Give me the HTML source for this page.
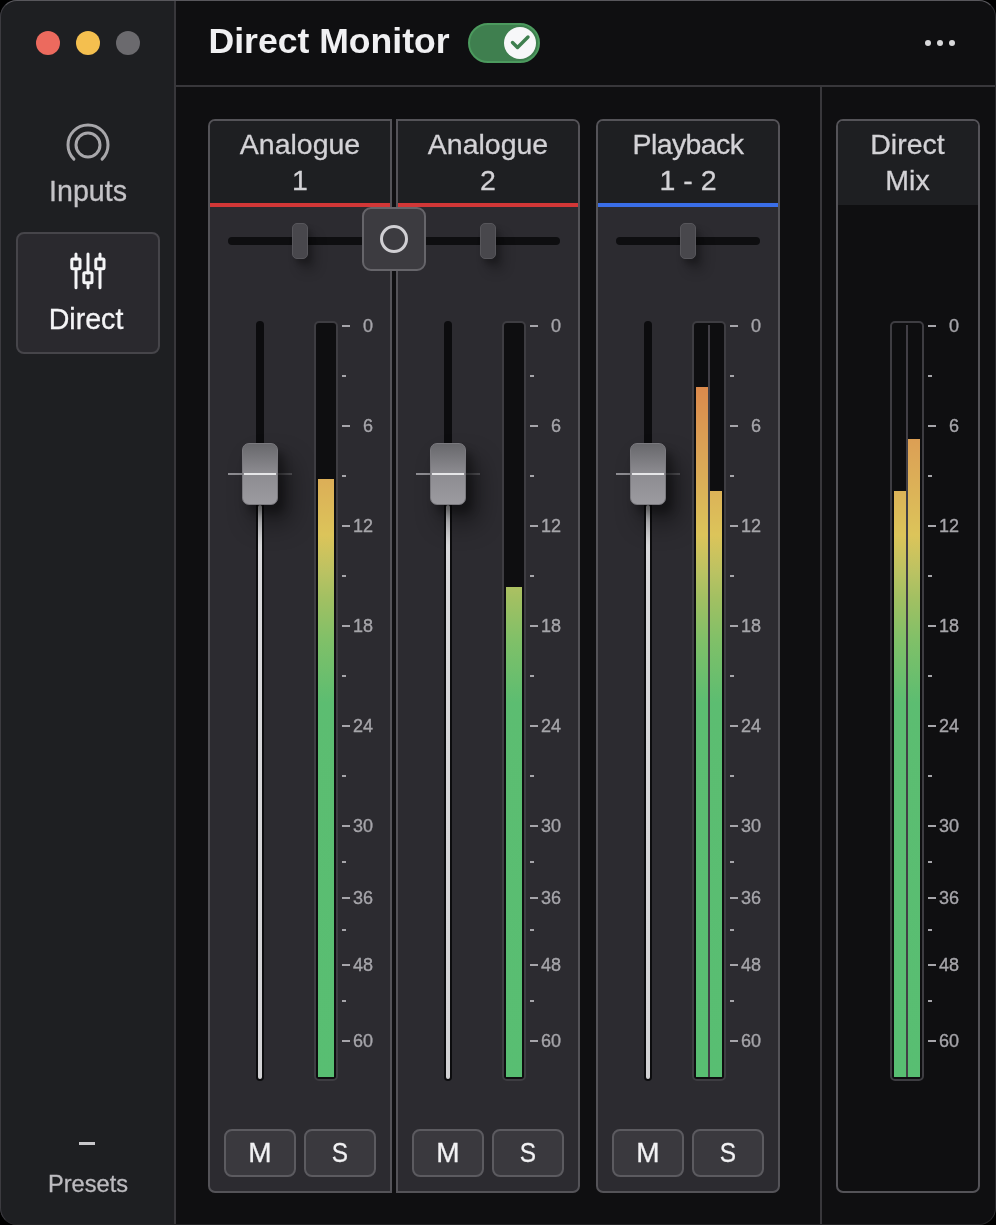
<!DOCTYPE html><html><head><meta charset="utf-8"><style>
*{box-sizing:border-box;margin:0;padding:0}
html,body{width:996px;height:1225px;overflow:hidden;background:#000;font-family:"Liberation Sans",sans-serif}
.a{position:absolute}
#win{left:0;top:0;width:996px;height:1225px;border-radius:17px;overflow:hidden;background:#0f0f11;will-change:transform}
#frame{left:0;top:0;width:996px;height:1225px;border-radius:17px;border:1px solid;border-color:#58575c #2c2b2e #252527 #3c3b40;pointer-events:none}
.dot{width:24px;height:24px;border-radius:12px}
.stext{left:0;width:176px;text-align:center;white-space:nowrap}
.pname{text-align:center;color:#d3d2d6;font-size:28px;line-height:36px;white-space:nowrap}
.tick{height:2px;background:#a6a5aa}
.lab{width:40px;text-align:right;color:#a6a5aa;font-size:18px;line-height:20px;-webkit-text-stroke:0.35px #a6a5aa}
.btn{width:72px;height:48px;border:2px solid #56555a;background:#38373c;border-radius:8px;color:#f0f0f2;font-size:28px;line-height:44px;text-align:center}
</style></head><body>
<div id="win" class="a">
<div class="a" style="left:0px;top:0px;width:174px;height:1225px;background:#1e1f22"></div>
<div class="a" style="left:174px;top:0px;width:2px;height:1225px;background:#38373b"></div>
<div class="a" style="left:36px;top:31px;width:24px;height:24px;background:#ec6a5e;border-radius:12px"></div>
<div class="a" style="left:76px;top:31px;width:24px;height:24px;background:#f4bf4f;border-radius:12px"></div>
<div class="a" style="left:116px;top:31px;width:24px;height:24px;background:#6b6a6e;border-radius:12px"></div>
<div class="a" style="left:176px;top:85px;width:820px;height:2px;background:#38373b"></div>
<div class="a" style="left:820px;top:87px;width:2px;height:1140px;background:#38373b"></div>
<div class="a" style="left:208.50px;top:19.26px;width:400px;text-align:left;font-size:35.6px;line-height:44px;color:#f0f0f2;white-space:nowrap;font-weight:bold;">Direct Monitor</div>
<div class="a" style="left:468px;top:23px;width:72px;height:40px;background:#3f7f4f;border:2px solid #4c9a5e;border-radius:20px"></div>
<svg class="a" style="left:500px;top:23px" width="40" height="40" viewBox="0 0 40 40"><circle cx="20" cy="20" r="16" fill="#f7f7f9"/><path d="M12.5 19.5 L17.5 24.5 L28 14" fill="none" stroke="#3f7f4f" stroke-width="3.4" stroke-linecap="round" stroke-linejoin="round"/></svg>
<div class="a" style="left:925px;top:40px;width:6px;height:6px;background:#d8d8da;border-radius:3px"></div>
<div class="a" style="left:937px;top:40px;width:6px;height:6px;background:#d8d8da;border-radius:3px"></div>
<div class="a" style="left:949px;top:40px;width:6px;height:6px;background:#d8d8da;border-radius:3px"></div>
<svg class="a" style="left:58px;top:115px" width="60" height="60" viewBox="0 0 60 60"><path d="M15.9 44.1 A20 20 0 1 1 44.1 44.1" fill="none" stroke="#a8a7ab" stroke-width="3" stroke-linecap="round"/><circle cx="30" cy="30" r="12" fill="none" stroke="#a8a7ab" stroke-width="3"/></svg>
<div class="a" style="left:-62.00px;top:173.29px;width:300px;text-align:center;font-size:28.6px;line-height:36px;color:#c4c3c7;white-space:nowrap;-webkit-text-stroke:0.3px #c4c3c7;">Inputs</div>
<div class="a" style="left:16px;top:232px;width:144px;height:122px;background:#2a292e;border:2px solid #46454a;border-radius:8px"></div>
<svg class="a" style="left:58px;top:240px" width="60" height="60" viewBox="58 240 60 60" fill="none" stroke="#f4f4f6" stroke-width="3" stroke-linecap="round"><path d="M76 254 V259 M76 269 V287.8 M88 254 V273 M88 283 V287.8 M100 254 V259 M100 269 V287.8"/><rect x="71.8" y="259" width="8.2" height="9.8" rx="1"/><rect x="83.8" y="272.8" width="8.2" height="10" rx="1"/><rect x="95.8" y="259" width="8.2" height="9.8" rx="1"/></svg>
<div class="a" style="left:-64.00px;top:300.89px;width:300px;text-align:center;font-size:28.6px;line-height:36px;color:#f4f4f6;white-space:nowrap;-webkit-text-stroke:0.3px #f4f4f6;">Direct</div>
<div class="a" style="left:79px;top:1142px;width:16px;height:3px;background:#c8c7cb"></div>
<div class="a" style="left:-62.00px;top:1169.02px;width:300px;text-align:center;font-size:23.6px;line-height:30px;color:#bdbcc0;white-space:nowrap;-webkit-text-stroke:0.3px #bdbcc0;">Presets</div>
<div class="a" style="left:208px;top:119px;width:184px;height:1074px;background:#2c2b30;border:2px solid #545358;border-radius:7px 0 0 7px;overflow:hidden"><div class="a" style="left:0;top:0;width:180px;height:84px;background:#1e1f22"></div><div class="a" style="left:0;top:82px;width:180px;height:4px;background:#d23737"></div></div>
<div class="a" style="left:150.00px;top:125.92px;width:300px;text-align:center;font-size:28.5px;line-height:36px;color:#d3d2d6;white-space:nowrap;-webkit-text-stroke:0.3px #d3d2d6;">Analogue</div>
<div class="a" style="left:150.00px;top:161.82px;width:300px;text-align:center;font-size:28.5px;line-height:36px;color:#d3d2d6;white-space:nowrap;-webkit-text-stroke:0.3px #d3d2d6;">1</div>
<div class="a" style="left:228px;top:237px;width:152px;height:8px;background:#0e0e10;border-radius:4px"></div>
<div class="a" style="left:292px;top:223px;width:16px;height:36px;background:#48474c;border:1px solid #57565b;border-radius:5px;box-shadow:3px 5px 5px rgba(0,0,0,.22),8px 12px 12px rgba(0,0,0,.22)"></div>
<div class="a" style="left:256px;top:321px;width:8px;height:760px;background:#0c0c0e;border-radius:4px"></div>
<div class="a" style="left:258px;top:505px;width:4px;height:574px;background:linear-gradient(#b8b8bb,#d8d8da 40px,#d2d2d4);border-radius:2px"></div>
<div class="a" style="left:228px;top:473px;width:64px;height:2px;background:linear-gradient(to right,#8e8d92 0,#8e8d92 50%,#56555a 50%,#56555a 100%)"></div>
<div class="a" style="left:242px;top:443px;width:36px;height:62px;background:linear-gradient(#68686c,#8c8b90 48%,#9c9ba0);border-radius:7px;box-shadow:6px 8px 8px rgba(0,0,0,.3),12px 18px 26px rgba(0,0,0,.45);border:1px solid #7a797e"></div>
<div class="a" style="left:244px;top:473px;width:32px;height:2px;background:#e6e6e8"></div>
<div class="a" style="left:314px;top:321px;width:24px;height:760px;background:#0e0e10;border:2px solid #3e3d42;border-radius:5px"></div>
<div class="a" style="left:318px;top:479px;width:16px;height:598px;background:linear-gradient(to bottom,#e07a46 0px,#dc8a4c 64px,#dca456 130px,#dcc45a 212px,#bac262 250px,#a2c062 275px,#80c068 317px,#5cbd71 380px,#58be72 760px);background-size:100% 756px;background-position:0 -156px"></div>
<div class="a" style="left:342px;top:325px;width:8px;height:2px;background:#a6a5aa"></div>
<div class="a lab" style="left:333px;top:316px;left:333px">0</div>
<div class="a" style="left:342px;top:375px;width:4px;height:2px;background:#a6a5aa"></div>
<div class="a" style="left:342px;top:425px;width:8px;height:2px;background:#a6a5aa"></div>
<div class="a lab" style="left:333px;top:416px;left:333px">6</div>
<div class="a" style="left:342px;top:475px;width:4px;height:2px;background:#a6a5aa"></div>
<div class="a" style="left:342px;top:525px;width:8px;height:2px;background:#a6a5aa"></div>
<div class="a lab" style="left:333px;top:516px;left:333px">12</div>
<div class="a" style="left:342px;top:575px;width:4px;height:2px;background:#a6a5aa"></div>
<div class="a" style="left:342px;top:625px;width:8px;height:2px;background:#a6a5aa"></div>
<div class="a lab" style="left:333px;top:616px;left:333px">18</div>
<div class="a" style="left:342px;top:675px;width:4px;height:2px;background:#a6a5aa"></div>
<div class="a" style="left:342px;top:725px;width:8px;height:2px;background:#a6a5aa"></div>
<div class="a lab" style="left:333px;top:716px;left:333px">24</div>
<div class="a" style="left:342px;top:775px;width:4px;height:2px;background:#a6a5aa"></div>
<div class="a" style="left:342px;top:825px;width:8px;height:2px;background:#a6a5aa"></div>
<div class="a lab" style="left:333px;top:816px;left:333px">30</div>
<div class="a" style="left:342px;top:861px;width:4px;height:2px;background:#a6a5aa"></div>
<div class="a" style="left:342px;top:897px;width:8px;height:2px;background:#a6a5aa"></div>
<div class="a lab" style="left:333px;top:888px;left:333px">36</div>
<div class="a" style="left:342px;top:929px;width:4px;height:2px;background:#a6a5aa"></div>
<div class="a" style="left:342px;top:964px;width:8px;height:2px;background:#a6a5aa"></div>
<div class="a lab" style="left:333px;top:955px;left:333px">48</div>
<div class="a" style="left:342px;top:1000px;width:4px;height:2px;background:#a6a5aa"></div>
<div class="a" style="left:342px;top:1040px;width:8px;height:2px;background:#a6a5aa"></div>
<div class="a lab" style="left:333px;top:1031px;left:333px">60</div>
<div class="a" style="left:224px;top:1129px;width:72px;height:48px;background:#3a393e;border:2px solid #5c5b60;border-radius:8px"></div>
<div class="a" style="left:304px;top:1129px;width:72px;height:48px;background:#3a393e;border:2px solid #5c5b60;border-radius:8px"></div>
<div class="a" style="left:110.00px;top:1134.80px;width:300px;text-align:center;font-size:28px;line-height:35px;color:#f2f2f4;white-space:nowrap;-webkit-text-stroke:0.3px #f2f2f4;">M</div>
<div class="a" style="left:190.00px;top:1134.80px;width:300px;text-align:center;font-size:28px;line-height:35px;color:#f2f2f4;white-space:nowrap;-webkit-text-stroke:0.3px #f2f2f4;transform:scaleX(.87)">S</div>
<div class="a" style="left:396px;top:119px;width:184px;height:1074px;background:#2c2b30;border:2px solid #545358;border-radius:0 7px 7px 0;overflow:hidden"><div class="a" style="left:0;top:0;width:180px;height:84px;background:#1e1f22"></div><div class="a" style="left:0;top:82px;width:180px;height:4px;background:#d23737"></div></div>
<div class="a" style="left:338.00px;top:125.92px;width:300px;text-align:center;font-size:28.5px;line-height:36px;color:#d3d2d6;white-space:nowrap;-webkit-text-stroke:0.3px #d3d2d6;">Analogue</div>
<div class="a" style="left:338.00px;top:161.82px;width:300px;text-align:center;font-size:28.5px;line-height:36px;color:#d3d2d6;white-space:nowrap;-webkit-text-stroke:0.3px #d3d2d6;">2</div>
<div class="a" style="left:408px;top:237px;width:152px;height:8px;background:#0e0e10;border-radius:4px"></div>
<div class="a" style="left:480px;top:223px;width:16px;height:36px;background:#48474c;border:1px solid #57565b;border-radius:5px;box-shadow:3px 5px 5px rgba(0,0,0,.22),8px 12px 12px rgba(0,0,0,.22)"></div>
<div class="a" style="left:444px;top:321px;width:8px;height:760px;background:#0c0c0e;border-radius:4px"></div>
<div class="a" style="left:446px;top:505px;width:4px;height:574px;background:linear-gradient(#b8b8bb,#d8d8da 40px,#d2d2d4);border-radius:2px"></div>
<div class="a" style="left:416px;top:473px;width:64px;height:2px;background:linear-gradient(to right,#8e8d92 0,#8e8d92 50%,#56555a 50%,#56555a 100%)"></div>
<div class="a" style="left:430px;top:443px;width:36px;height:62px;background:linear-gradient(#68686c,#8c8b90 48%,#9c9ba0);border-radius:7px;box-shadow:6px 8px 8px rgba(0,0,0,.3),12px 18px 26px rgba(0,0,0,.45);border:1px solid #7a797e"></div>
<div class="a" style="left:432px;top:473px;width:32px;height:2px;background:#e6e6e8"></div>
<div class="a" style="left:502px;top:321px;width:24px;height:760px;background:#0e0e10;border:2px solid #3e3d42;border-radius:5px"></div>
<div class="a" style="left:506px;top:587px;width:16px;height:490px;background:linear-gradient(to bottom,#e07a46 0px,#dc8a4c 64px,#dca456 130px,#dcc45a 212px,#bac262 250px,#a2c062 275px,#80c068 317px,#5cbd71 380px,#58be72 760px);background-size:100% 756px;background-position:0 -264px"></div>
<div class="a" style="left:530px;top:325px;width:8px;height:2px;background:#a6a5aa"></div>
<div class="a lab" style="left:521px;top:316px;left:521px">0</div>
<div class="a" style="left:530px;top:375px;width:4px;height:2px;background:#a6a5aa"></div>
<div class="a" style="left:530px;top:425px;width:8px;height:2px;background:#a6a5aa"></div>
<div class="a lab" style="left:521px;top:416px;left:521px">6</div>
<div class="a" style="left:530px;top:475px;width:4px;height:2px;background:#a6a5aa"></div>
<div class="a" style="left:530px;top:525px;width:8px;height:2px;background:#a6a5aa"></div>
<div class="a lab" style="left:521px;top:516px;left:521px">12</div>
<div class="a" style="left:530px;top:575px;width:4px;height:2px;background:#a6a5aa"></div>
<div class="a" style="left:530px;top:625px;width:8px;height:2px;background:#a6a5aa"></div>
<div class="a lab" style="left:521px;top:616px;left:521px">18</div>
<div class="a" style="left:530px;top:675px;width:4px;height:2px;background:#a6a5aa"></div>
<div class="a" style="left:530px;top:725px;width:8px;height:2px;background:#a6a5aa"></div>
<div class="a lab" style="left:521px;top:716px;left:521px">24</div>
<div class="a" style="left:530px;top:775px;width:4px;height:2px;background:#a6a5aa"></div>
<div class="a" style="left:530px;top:825px;width:8px;height:2px;background:#a6a5aa"></div>
<div class="a lab" style="left:521px;top:816px;left:521px">30</div>
<div class="a" style="left:530px;top:861px;width:4px;height:2px;background:#a6a5aa"></div>
<div class="a" style="left:530px;top:897px;width:8px;height:2px;background:#a6a5aa"></div>
<div class="a lab" style="left:521px;top:888px;left:521px">36</div>
<div class="a" style="left:530px;top:929px;width:4px;height:2px;background:#a6a5aa"></div>
<div class="a" style="left:530px;top:964px;width:8px;height:2px;background:#a6a5aa"></div>
<div class="a lab" style="left:521px;top:955px;left:521px">48</div>
<div class="a" style="left:530px;top:1000px;width:4px;height:2px;background:#a6a5aa"></div>
<div class="a" style="left:530px;top:1040px;width:8px;height:2px;background:#a6a5aa"></div>
<div class="a lab" style="left:521px;top:1031px;left:521px">60</div>
<div class="a" style="left:412px;top:1129px;width:72px;height:48px;background:#3a393e;border:2px solid #5c5b60;border-radius:8px"></div>
<div class="a" style="left:492px;top:1129px;width:72px;height:48px;background:#3a393e;border:2px solid #5c5b60;border-radius:8px"></div>
<div class="a" style="left:298.00px;top:1134.80px;width:300px;text-align:center;font-size:28px;line-height:35px;color:#f2f2f4;white-space:nowrap;-webkit-text-stroke:0.3px #f2f2f4;">M</div>
<div class="a" style="left:378.00px;top:1134.80px;width:300px;text-align:center;font-size:28px;line-height:35px;color:#f2f2f4;white-space:nowrap;-webkit-text-stroke:0.3px #f2f2f4;transform:scaleX(.87)">S</div>
<div class="a" style="left:596px;top:119px;width:184px;height:1074px;background:#2c2b30;border:2px solid #545358;border-radius:7px 7px 7px 7px;overflow:hidden"><div class="a" style="left:0;top:0;width:180px;height:84px;background:#1e1f22"></div><div class="a" style="left:0;top:82px;width:180px;height:4px;background:#3a6ee8"></div></div>
<div class="a" style="left:538.00px;top:125.92px;width:300px;text-align:center;font-size:28.5px;line-height:36px;color:#d3d2d6;white-space:nowrap;-webkit-text-stroke:0.3px #d3d2d6;letter-spacing:-0.6px">Playback</div>
<div class="a" style="left:538.00px;top:161.82px;width:300px;text-align:center;font-size:28.5px;line-height:36px;color:#d3d2d6;white-space:nowrap;-webkit-text-stroke:0.3px #d3d2d6;">1 - 2</div>
<div class="a" style="left:616px;top:237px;width:144px;height:8px;background:#0e0e10;border-radius:4px"></div>
<div class="a" style="left:680px;top:223px;width:16px;height:36px;background:#48474c;border:1px solid #57565b;border-radius:5px;box-shadow:3px 5px 5px rgba(0,0,0,.22),8px 12px 12px rgba(0,0,0,.22)"></div>
<div class="a" style="left:644px;top:321px;width:8px;height:760px;background:#0c0c0e;border-radius:4px"></div>
<div class="a" style="left:646px;top:505px;width:4px;height:574px;background:linear-gradient(#b8b8bb,#d8d8da 40px,#d2d2d4);border-radius:2px"></div>
<div class="a" style="left:616px;top:473px;width:64px;height:2px;background:linear-gradient(to right,#8e8d92 0,#8e8d92 50%,#56555a 50%,#56555a 100%)"></div>
<div class="a" style="left:630px;top:443px;width:36px;height:62px;background:linear-gradient(#68686c,#8c8b90 48%,#9c9ba0);border-radius:7px;box-shadow:6px 8px 8px rgba(0,0,0,.3),12px 18px 26px rgba(0,0,0,.45);border:1px solid #7a797e"></div>
<div class="a" style="left:632px;top:473px;width:32px;height:2px;background:#e6e6e8"></div>
<div class="a" style="left:692px;top:321px;width:34px;height:760px;background:#0e0e10;border:2px solid #3e3d42;border-radius:5px"></div>
<div class="a" style="left:696px;top:387px;width:12px;height:690px;background:linear-gradient(to bottom,#e07a46 0px,#dc8a4c 64px,#dca456 130px,#dcc45a 212px,#bac262 250px,#a2c062 275px,#80c068 317px,#5cbd71 380px,#58be72 760px);background-size:100% 756px;background-position:0 -64px"></div>
<div class="a" style="left:710px;top:491px;width:12px;height:586px;background:linear-gradient(to bottom,#e07a46 0px,#dc8a4c 64px,#dca456 130px,#dcc45a 212px,#bac262 250px,#a2c062 275px,#80c068 317px,#5cbd71 380px,#58be72 760px);background-size:100% 756px;background-position:0 -168px"></div>
<div class="a" style="left:708px;top:325px;width:2px;height:752px;background:#423f46"></div>
<div class="a" style="left:730px;top:325px;width:8px;height:2px;background:#a6a5aa"></div>
<div class="a lab" style="left:721px;top:316px;left:721px">0</div>
<div class="a" style="left:730px;top:375px;width:4px;height:2px;background:#a6a5aa"></div>
<div class="a" style="left:730px;top:425px;width:8px;height:2px;background:#a6a5aa"></div>
<div class="a lab" style="left:721px;top:416px;left:721px">6</div>
<div class="a" style="left:730px;top:475px;width:4px;height:2px;background:#a6a5aa"></div>
<div class="a" style="left:730px;top:525px;width:8px;height:2px;background:#a6a5aa"></div>
<div class="a lab" style="left:721px;top:516px;left:721px">12</div>
<div class="a" style="left:730px;top:575px;width:4px;height:2px;background:#a6a5aa"></div>
<div class="a" style="left:730px;top:625px;width:8px;height:2px;background:#a6a5aa"></div>
<div class="a lab" style="left:721px;top:616px;left:721px">18</div>
<div class="a" style="left:730px;top:675px;width:4px;height:2px;background:#a6a5aa"></div>
<div class="a" style="left:730px;top:725px;width:8px;height:2px;background:#a6a5aa"></div>
<div class="a lab" style="left:721px;top:716px;left:721px">24</div>
<div class="a" style="left:730px;top:775px;width:4px;height:2px;background:#a6a5aa"></div>
<div class="a" style="left:730px;top:825px;width:8px;height:2px;background:#a6a5aa"></div>
<div class="a lab" style="left:721px;top:816px;left:721px">30</div>
<div class="a" style="left:730px;top:861px;width:4px;height:2px;background:#a6a5aa"></div>
<div class="a" style="left:730px;top:897px;width:8px;height:2px;background:#a6a5aa"></div>
<div class="a lab" style="left:721px;top:888px;left:721px">36</div>
<div class="a" style="left:730px;top:929px;width:4px;height:2px;background:#a6a5aa"></div>
<div class="a" style="left:730px;top:964px;width:8px;height:2px;background:#a6a5aa"></div>
<div class="a lab" style="left:721px;top:955px;left:721px">48</div>
<div class="a" style="left:730px;top:1000px;width:4px;height:2px;background:#a6a5aa"></div>
<div class="a" style="left:730px;top:1040px;width:8px;height:2px;background:#a6a5aa"></div>
<div class="a lab" style="left:721px;top:1031px;left:721px">60</div>
<div class="a" style="left:612px;top:1129px;width:72px;height:48px;background:#3a393e;border:2px solid #5c5b60;border-radius:8px"></div>
<div class="a" style="left:692px;top:1129px;width:72px;height:48px;background:#3a393e;border:2px solid #5c5b60;border-radius:8px"></div>
<div class="a" style="left:498.00px;top:1134.80px;width:300px;text-align:center;font-size:28px;line-height:35px;color:#f2f2f4;white-space:nowrap;-webkit-text-stroke:0.3px #f2f2f4;">M</div>
<div class="a" style="left:578.00px;top:1134.80px;width:300px;text-align:center;font-size:28px;line-height:35px;color:#f2f2f4;white-space:nowrap;-webkit-text-stroke:0.3px #f2f2f4;transform:scaleX(.87)">S</div>
<div class="a" style="left:362px;top:207px;width:64px;height:64px;background:#3c3b40;border:2px solid #66656a;border-radius:9px"></div>
<svg class="a" style="left:362px;top:207px" width="64" height="64"><circle cx="32" cy="32" r="12.5" fill="none" stroke="#d0cfd3" stroke-width="3"/></svg>
<div class="a" style="left:836px;top:119px;width:144px;height:1074px;background:#0f0f11;border:2px solid #545358;border-radius:7px;overflow:hidden"><div class="a" style="left:0;top:0;width:140px;height:84px;background:#1e1f22"></div></div>
<div class="a" style="left:757.50px;top:126.12px;width:300px;text-align:center;font-size:28.5px;line-height:36px;color:#d3d2d6;white-space:nowrap;-webkit-text-stroke:0.3px #d3d2d6;">Direct</div>
<div class="a" style="left:757.50px;top:161.82px;width:300px;text-align:center;font-size:28.5px;line-height:36px;color:#d3d2d6;white-space:nowrap;-webkit-text-stroke:0.3px #d3d2d6;">Mix</div>
<div class="a" style="left:890px;top:321px;width:34px;height:760px;background:#0e0e10;border:2px solid #3e3d42;border-radius:5px"></div>
<div class="a" style="left:894px;top:491px;width:12px;height:586px;background:linear-gradient(to bottom,#e07a46 0px,#dc8a4c 64px,#dca456 130px,#dcc45a 212px,#bac262 250px,#a2c062 275px,#80c068 317px,#5cbd71 380px,#58be72 760px);background-size:100% 756px;background-position:0 -168px"></div>
<div class="a" style="left:908px;top:439px;width:12px;height:638px;background:linear-gradient(to bottom,#e07a46 0px,#dc8a4c 64px,#dca456 130px,#dcc45a 212px,#bac262 250px,#a2c062 275px,#80c068 317px,#5cbd71 380px,#58be72 760px);background-size:100% 756px;background-position:0 -116px"></div>
<div class="a" style="left:906px;top:325px;width:2px;height:752px;background:#423f46"></div>
<div class="a" style="left:928px;top:325px;width:8px;height:2px;background:#a6a5aa"></div>
<div class="a lab" style="left:919px;top:316px;left:919px">0</div>
<div class="a" style="left:928px;top:375px;width:4px;height:2px;background:#a6a5aa"></div>
<div class="a" style="left:928px;top:425px;width:8px;height:2px;background:#a6a5aa"></div>
<div class="a lab" style="left:919px;top:416px;left:919px">6</div>
<div class="a" style="left:928px;top:475px;width:4px;height:2px;background:#a6a5aa"></div>
<div class="a" style="left:928px;top:525px;width:8px;height:2px;background:#a6a5aa"></div>
<div class="a lab" style="left:919px;top:516px;left:919px">12</div>
<div class="a" style="left:928px;top:575px;width:4px;height:2px;background:#a6a5aa"></div>
<div class="a" style="left:928px;top:625px;width:8px;height:2px;background:#a6a5aa"></div>
<div class="a lab" style="left:919px;top:616px;left:919px">18</div>
<div class="a" style="left:928px;top:675px;width:4px;height:2px;background:#a6a5aa"></div>
<div class="a" style="left:928px;top:725px;width:8px;height:2px;background:#a6a5aa"></div>
<div class="a lab" style="left:919px;top:716px;left:919px">24</div>
<div class="a" style="left:928px;top:775px;width:4px;height:2px;background:#a6a5aa"></div>
<div class="a" style="left:928px;top:825px;width:8px;height:2px;background:#a6a5aa"></div>
<div class="a lab" style="left:919px;top:816px;left:919px">30</div>
<div class="a" style="left:928px;top:861px;width:4px;height:2px;background:#a6a5aa"></div>
<div class="a" style="left:928px;top:897px;width:8px;height:2px;background:#a6a5aa"></div>
<div class="a lab" style="left:919px;top:888px;left:919px">36</div>
<div class="a" style="left:928px;top:929px;width:4px;height:2px;background:#a6a5aa"></div>
<div class="a" style="left:928px;top:964px;width:8px;height:2px;background:#a6a5aa"></div>
<div class="a lab" style="left:919px;top:955px;left:919px">48</div>
<div class="a" style="left:928px;top:1000px;width:4px;height:2px;background:#a6a5aa"></div>
<div class="a" style="left:928px;top:1040px;width:8px;height:2px;background:#a6a5aa"></div>
<div class="a lab" style="left:919px;top:1031px;left:919px">60</div>
</div>
<div id="frame" class="a"></div>
</body></html>
